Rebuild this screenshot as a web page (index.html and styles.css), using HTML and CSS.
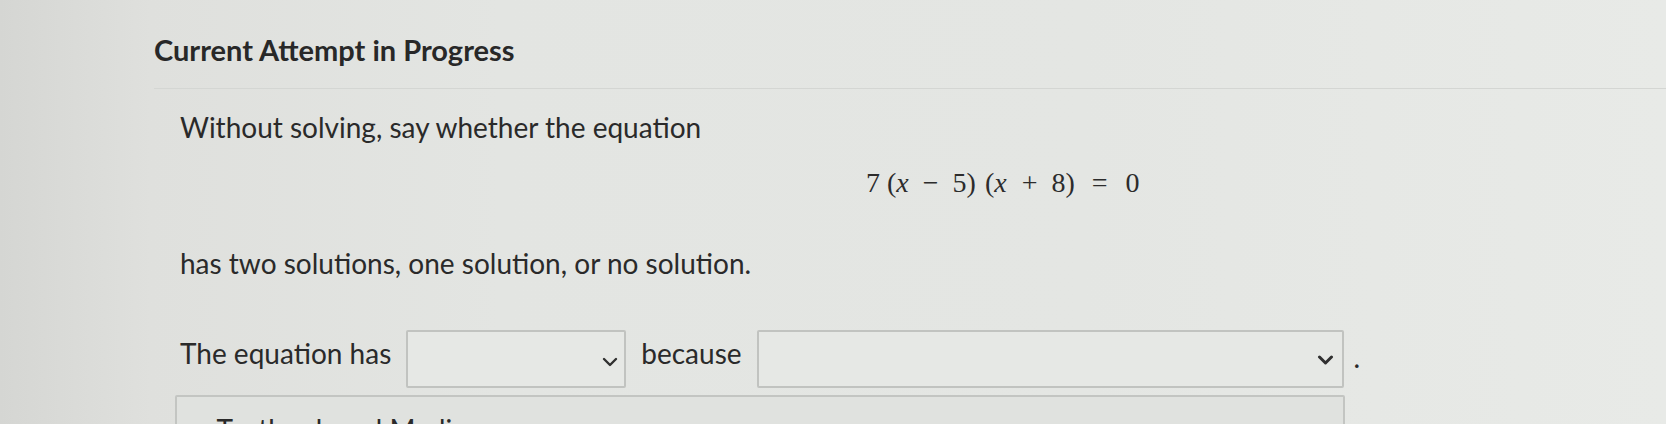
FILE: index.html
```html
<!DOCTYPE html>
<html lang="en">
<head>
<meta charset="utf-8">
<title>Current Attempt in Progress</title>
<link rel="stylesheet" href="styles.css">
</head>
<body>
<div class="page">
  <h1 class="title">Current Attempt in Progress</h1>
  <div class="rule"></div>
  <div class="question">
    <p class="text">Without solving, say whether the equation</p>
    <div class="math-display">
      <span class="mn">7</span>
      <span class="mo paren-open">(</span>
      <span class="mi">x</span>
      <span class="mo bin">&minus;</span>
      <span class="mn after-bin">5</span>
      <span class="mo">)</span>
      <span class="mo paren-next">(</span>
      <span class="mi">x</span>
      <span class="mo bin bin-plus">+</span>
      <span class="mn after-bin">8</span>
      <span class="mo">)</span>
      <span class="mo rel">=</span>
      <span class="mn after-rel">0</span>
    </div>
    <p class="text text-second">has two solutions, one solution, or no solution.</p>
    <div class="answer-row">
      <span class="label">The equation has</span>
      <div class="select select-short">
        <svg class="chevron" viewBox="0 0 16 10" width="16" height="10" aria-hidden="true"><path d="M2 2 L8 8 L14 2"/></svg>
      </div>
      <span class="label">because</span>
      <div class="select select-long">
        <svg class="chevron chevron-bold" viewBox="0 0 16 10" width="17" height="10" aria-hidden="true"><path d="M2 2 L8 8 L14 2"/></svg>
      </div>
      <span class="label period">.</span>
    </div>
    <div class="media-box">
      <span class="media-text">eTextbook and Media</span>
    </div>
  </div>
</div>
</body>
</html>
```

FILE: styles.css
```css
html, body {
  margin: 0;
  padding: 0;
}

body {
  width: 1666px;
  height: 424px;
  overflow: hidden;
  background: linear-gradient(to right, #d5d6d3 0%, #dfe0dd 9%, #e3e5e2 30%, #e4e6e3 65%, #e8eae7 100%);
  font-family: Lato, "Open Sans", "Liberation Sans", sans-serif;
  color: #2a2a2a;
}

.page {
  padding: 33px 0 0 154px;
}

.title {
  margin: 0;
  font-size: 29px;
  line-height: 34px;
  font-weight: 700;
  color: #282828;
}

.rule {
  margin: 21px 0 0 0;
  height: 0;
  border-top: 1px solid #d4d6d3;
}

.question {
  padding-left: 26px;
}

.text {
  margin: 21px 0 0 0;
  font-size: 28px;
  line-height: 34px;
  font-weight: 400;
}

.text-second {
  margin-top: 46px;
}

.math-display {
  display: flex;
  align-items: baseline;
  margin: 22px 0 0 686px;
  font-family: "Liberation Serif", "DejaVu Serif", serif;
  font-size: 28px;
  line-height: 34px;
  color: #2c2c2c;
}

.mi {
  font-style: italic;
}

.paren-open {
  margin-left: 7px;
}

.paren-next {
  margin-left: 9px;
}

.bin {
  margin-left: 14px;
}

.bin-plus {
  margin-left: 15px;
}

.after-bin {
  margin-left: 14px;
}

.rel {
  margin-left: 17px;
}

.after-rel {
  margin-left: 18px;
}

.answer-row {
  display: flex;
  align-items: center;
  gap: 15px;
  margin-top: 50px;
  height: 58px;
}

.label {
  font-size: 28px;
  line-height: 34px;
  margin-bottom: 12px;
}

.period {
  margin-left: -5px;
  margin-bottom: 4px;
}

.select {
  box-sizing: border-box;
  height: 58px;
  border: 2px solid #c1c3c0;
  border-radius: 2px;
  background: #e6e8e5;
  display: flex;
  align-items: center;
  justify-content: flex-end;
  padding: 6px 6px 0 0;
}

.select-short {
  width: 220px;
}

.select-long {
  width: 587px;
  padding-right: 8px;
  padding-top: 2px;
}

.chevron path {
  fill: none;
  stroke: #303030;
  stroke-width: 2.4;
  stroke-linecap: round;
  stroke-linejoin: round;
}

.chevron-bold path {
  stroke-width: 3;
}

.media-box {
  box-sizing: border-box;
  margin: 7px 0 0 -5px;
  width: 1170px;
  height: 80px;
  border: 2px solid #c3c5c2;
  border-radius: 2px;
  background: #e0e2df;
  padding: 15px 0 0 28px;
}

.media-text {
  font-size: 28px;
  line-height: 34px;
  color: #2a2a2a;
}
```
